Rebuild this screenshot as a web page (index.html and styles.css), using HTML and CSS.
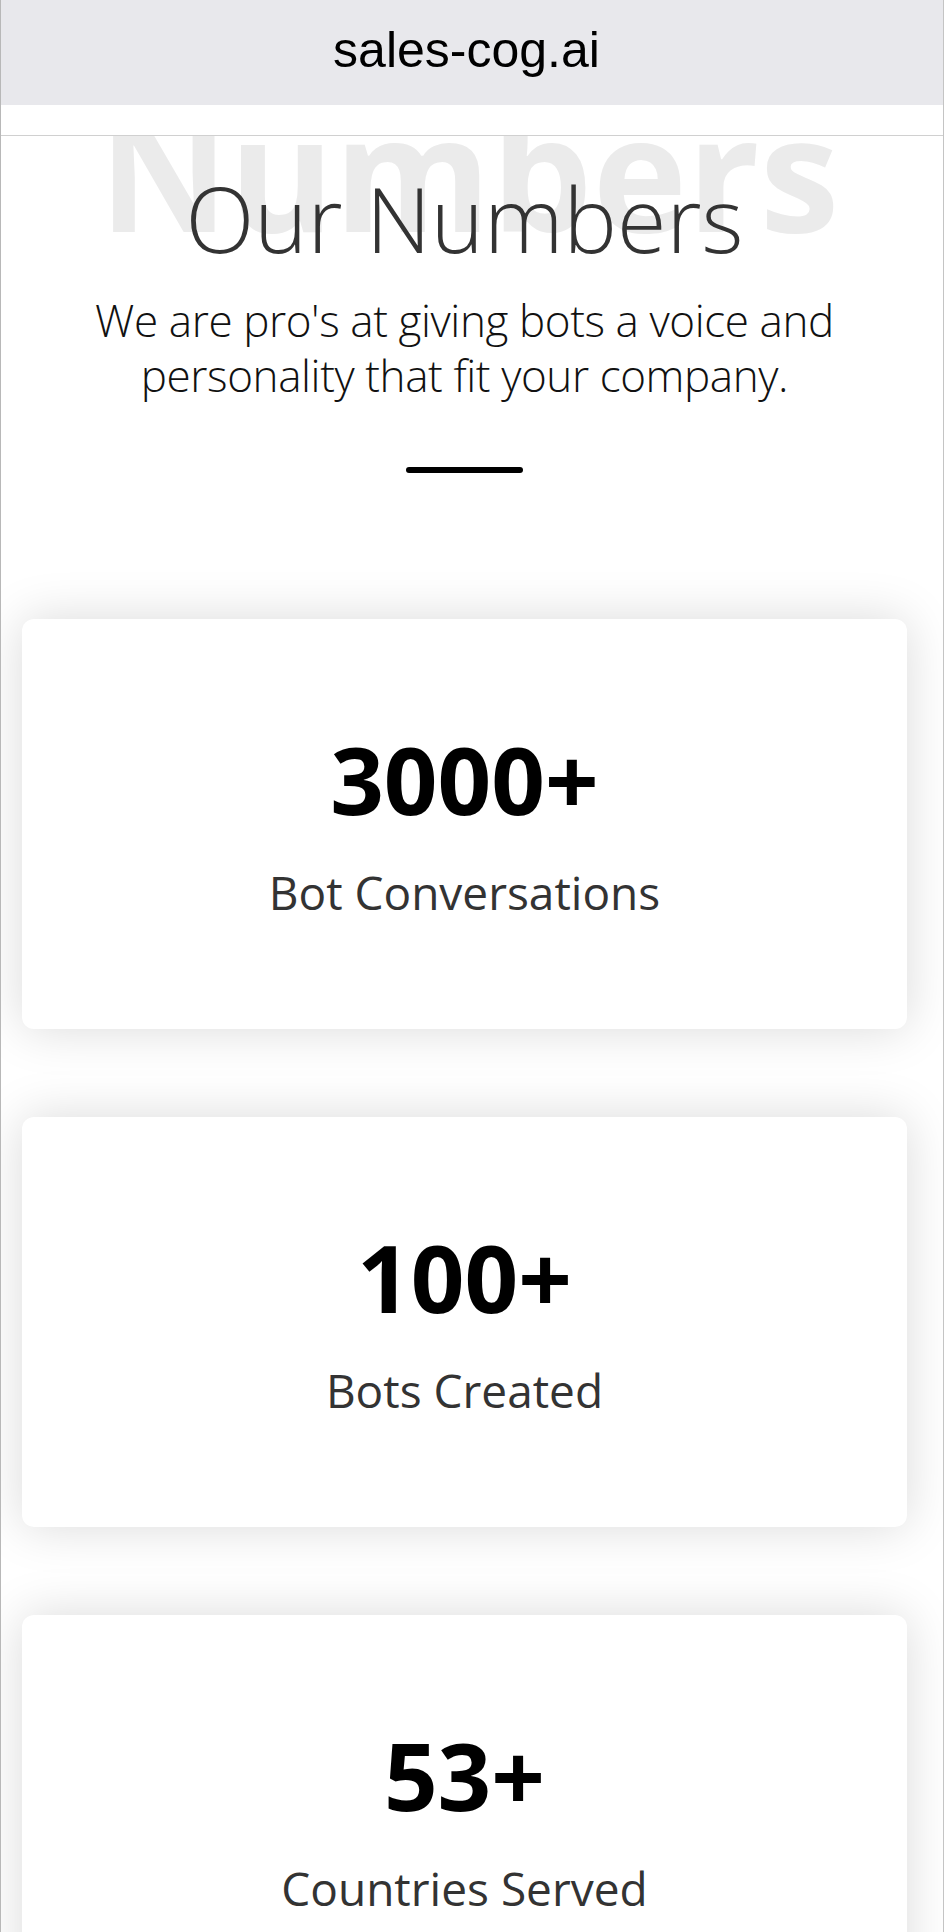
FILE: index.html
```html
<!DOCTYPE html>
<html lang="en">
<head>
    <meta charset="UTF-8">
    <title>sales-cog.ai - Our Numbers</title>
    <link rel="stylesheet" href="styles.css">
</head>
<body>
    <div class="screen">
        <div class="urlBar">sales-cog.ai</div>
        <div class="navStrip"></div>

        <section class="numbers">
            <span class="watermark">Numbers</span>
            <h1 class="title">Our Numbers</h1>
            <p class="lead">We are pro's at giving bots a voice and<br>personality that fit your company.</p>
            <span class="divider"></span>

            <div class="stats">
                <div class="statCard">
                    <div class="statValue">3000+</div>
                    <div class="statLabel">Bot Conversations</div>
                </div>
                <div class="statCard">
                    <div class="statValue">100+</div>
                    <div class="statLabel">Bots Created</div>
                </div>
                <div class="statCard">
                    <div class="statValue">53+</div>
                    <div class="statLabel">Countries Served</div>
                </div>
            </div>
        </section>
    </div>
</body>
</html>
```

FILE: styles.css
```css
body {
    margin: 0;
    background-color: #fff;
    font-family: 'Open Sans', sans-serif;
}

.screen {
    width: 944px;
    min-height: 1932px;
    box-sizing: border-box;
    border-left: 1px solid #b8b8b8;
    border-right: 1px solid #c4c4c4;
    background-color: #fff;
    overflow: hidden;
}

.urlBar {
    height: 105px;
    line-height: 101px;
    padding-right: 11px;
    background-color: #e8e8ec;
    text-align: center;
    font-family: 'Liberation Sans', Arial, sans-serif;
    font-size: 50px;
    color: #000;
}

.navStrip {
    height: 30px;
    background-color: #fff;
    border-bottom: 1px solid #d0d0d0;
}

.numbers {
    position: relative;
    overflow: hidden;
    padding: 37px 36px 80px 21px;
    text-align: center;
}

/* big faded word sitting behind the heading */
.watermark {
    position: absolute;
    top: -46px;
    left: 0;
    right: 6px;
    font-size: 160px;
    line-height: 1;
    font-weight: 700;
    color: #ebebeb;
    white-space: nowrap;
}

.title {
    position: relative;
    margin: 0;
    font-size: 90px;
    line-height: 1;
    font-weight: 300;
    color: #333;
}

.lead {
    position: relative;
    margin: 30px 0 0;
    font-size: 44px;
    line-height: 55px;
    letter-spacing: -0.4px;
    font-weight: 300;
    color: #111;
}

.divider {
    display: block;
    width: 117px;
    height: 6px;
    margin: 64px auto 0;
    border-radius: 3px;
    background-color: #000;
}

.stats {
    display: flex;
    flex-direction: column;
    gap: 88px;
    margin-top: 146px;
}

.statCard {
    height: 410px;
    box-sizing: border-box;
    padding: 113px 20px 0;
    background-color: #fff;
    border-radius: 12px;
    box-shadow: 0 0 50px rgba(0, 0, 0, 0.15);
}

.statValue {
    font-size: 94px;
    line-height: 1;
    font-weight: 700;
    color: #000;
}

.statLabel {
    margin-top: 39px;
    font-size: 46px;
    line-height: 1.2;
    color: #333;
}
```
